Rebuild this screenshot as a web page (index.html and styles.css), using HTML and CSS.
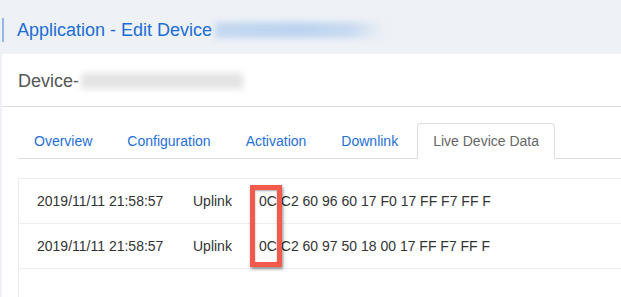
FILE: index.html
```html
<!DOCTYPE html>
<html>
<head>
    <title>Application - Edit Device</title>
    <meta name="viewport" content="width=device-width, initial-scale=1.0">
    <link rel="stylesheet" href="styles.css">
</head>
<body>
    <!-- Page title -->
    <header class="page-head">
        <h1 class="page-title">Application - Edit Device<span class="blur blur-blue"></span></h1>
    </header>

    <!-- Device panel -->
    <main class="panel">
        <div class="panel-head">
            <span class="device-name">Device-</span><span class="blur blur-grey"></span>
        </div>
        <div class="panel-body">
            <ul class="tabs">
                <li><a href="#">Overview</a></li>
                <li><a href="#">Configuration</a></li>
                <li><a href="#">Activation</a></li>
                <li><a href="#">Downlink</a></li>
                <li class="active"><a href="#">Live Device Data</a></li>
            </ul>
            <div class="data-table">
                <div class="row">
                    <span class="cell-time">2019/11/11 21:58:57</span>
                    <span class="cell-type">Uplink</span>
                    <span class="cell-data">0C C2 60 96 60 17 F0 17 FF F7 FF F</span>
                </div>
                <div class="row">
                    <span class="cell-time">2019/11/11 21:58:57</span>
                    <span class="cell-type">Uplink</span>
                    <span class="cell-data">0C C2 60 97 50 18 00 17 FF F7 FF F</span>
                </div>
            </div>
        </div>
    </main>

    <!-- Annotation over the first byte -->
    <div class="highlight"></div>
</body>
</html>
```
FILE: styles.css
```css
body {
    font-family: "Liberation Sans", Arial, sans-serif;
    background-color: #eef1f6;
    margin: 0;
    padding: 0;
    width: 621px;
    height: 297px;
    overflow: hidden;
    position: relative;
}
.page-head {
    height: 54px;
    box-sizing: border-box;
    padding: 18px 0 0 2px;
}
.page-title {
    margin: 0;
    padding-left: 13px;
    border-left: 2px solid #93b7e2;
    font-size: 18px;
    font-weight: normal;
    line-height: 24px;
    color: #1c6dd6;
    display: flex;
    align-items: center;
}
.blur {
    display: inline-block;
    filter: blur(3px);
}
.blur-blue {
    width: 170px;
    height: 16px;
    margin-left: 3px;
    background: linear-gradient(90deg, #c4d8f0 0%, #bcd3ef 50%, #c8dbf1 80%, #eef1f6 100%);
}
.panel {
    margin-left: 2px;
    background: #fff;
    height: 243px;
}
.panel-head {
    display: flex;
    align-items: center;
    padding: 15px 0 13px 16px;
    border-bottom: 1px solid #dcdcdc;
}
.device-name {
    font-size: 18px;
    line-height: 24px;
    color: #555;
}
.blur-grey {
    width: 162px;
    height: 16px;
    margin-left: 2px;
    background: #e4e4e4;
}
.panel-body {
    padding: 16px 0 0 16px;
}
.tabs {
    list-style: none;
    margin: 0;
    padding: 0;
    display: flex;
    border-bottom: 1px solid #ddd;
}
.tabs li {
    margin-right: 3px;
    margin-bottom: -1px;
}
.tabs a {
    display: block;
    padding: 7px 15px;
    border: 1px solid transparent;
    border-radius: 4px 4px 0 0;
    font-size: 14px;
    line-height: 20px;
    color: #1f6fd8;
    text-decoration: none;
}
.tabs .active a {
    background: #fff;
    color: #666;
    border-color: #ddd #ddd transparent;
}
.data-table {
    margin-top: 19px;
    border-top: 1px solid #ebedf0;
    border-left: 1px solid #ebedf0;
    height: 130px;
}
.row {
    display: flex;
    height: 44px;
    align-items: center;
    padding-left: 18px;
    border-bottom: 1px solid #ebedf0;
    font-size: 14px;
    color: #333;
    white-space: nowrap;
}
.cell-time {
    width: 156px;
}
.cell-type {
    width: 66px;
}
.highlight {
    position: absolute;
    left: 250px;
    top: 185px;
    width: 22px;
    height: 72px;
    border: 5px solid #f45a4b;
    box-shadow: 1px 2px 3px rgba(0, 0, 0, 0.45), inset 0 1px 2px rgba(0, 0, 0, 0.35);
}
```
